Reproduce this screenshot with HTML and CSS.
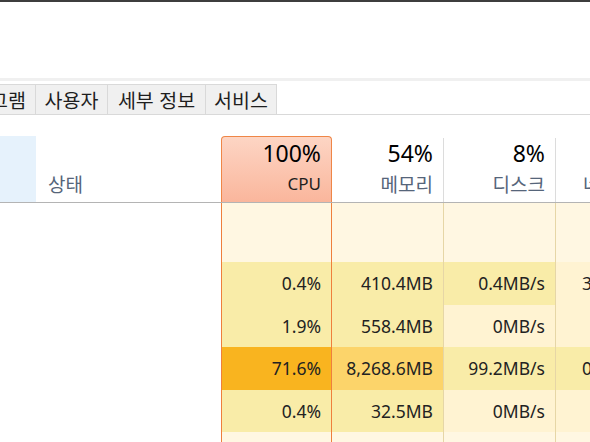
FILE: index.html
```html
<!DOCTYPE html>
<html lang="ko">
<head>
<meta charset="utf-8">
<title>작업 관리자</title>
<link rel="stylesheet" href="styles.css">
</head>
<body>
<div class="app">
  <div class="titlebar"></div>
  <div class="menu"></div>
  <div class="tabs">
    <div class="tab tab-cut">시작 프로그램</div>
    <div class="tab">사용자</div>
    <div class="tab">세부 정보</div>
    <div class="tab">서비스</div>
    <div class="tab-fill"></div>
  </div>
  <div class="table">
    <div class="thead">
      <div class="th c-name"></div>
      <div class="th c-status"><span class="lbl">상태</span></div>
      <div class="th c-cpu metric"><span class="val">100%</span><span class="lbl">CPU</span></div>
      <div class="th c-mem metric"><span class="val">54%</span><span class="lbl">메모리</span></div>
      <div class="th c-disk metric"><span class="val">8%</span><span class="lbl">디스크</span></div>
      <div class="th c-net metric"><span class="val">&nbsp;</span><span class="lbl lbl-left">네트워크</span></div>
    </div>
    <div class="row group">
      <div class="td c-name"></div>
      <div class="td c-status"></div>
      <div class="td c-cpu h0"></div>
      <div class="td c-mem h0"></div>
      <div class="td c-disk h0"></div>
      <div class="td c-net h0"></div>
    </div>
    <div class="row">
      <div class="td c-name"></div>
      <div class="td c-status"></div>
      <div class="td c-cpu h2">0.4%</div>
      <div class="td c-mem h2">410.4MB</div>
      <div class="td c-disk h2">0.4MB/s</div>
      <div class="td c-net h1 net">3.0Mbps</div>
    </div>
    <div class="row">
      <div class="td c-name"></div>
      <div class="td c-status"></div>
      <div class="td c-cpu h2">1.9%</div>
      <div class="td c-mem h2">558.4MB</div>
      <div class="td c-disk h1">0MB/s</div>
      <div class="td c-net h1 net"></div>
    </div>
    <div class="row">
      <div class="td c-name"></div>
      <div class="td c-status"></div>
      <div class="td c-cpu h5">71.6%</div>
      <div class="td c-mem h4">8,268.6MB</div>
      <div class="td c-disk h2">99.2MB/s</div>
      <div class="td c-net h2 net">0Mbps</div>
    </div>
    <div class="row">
      <div class="td c-name"></div>
      <div class="td c-status"></div>
      <div class="td c-cpu h2">0.4%</div>
      <div class="td c-mem h2">32.5MB</div>
      <div class="td c-disk h1">0MB/s</div>
      <div class="td c-net h1 net"></div>
    </div>
    <div class="row">
      <div class="td c-name"></div>
      <div class="td c-status"></div>
      <div class="td c-cpu h0"></div>
      <div class="td c-mem h0"></div>
      <div class="td c-disk h0"></div>
      <div class="td c-net h0"></div>
    </div>
  </div>
</div>
</body>
</html>
```
FILE: styles.css
```css
html, body {
  margin: 0;
  padding: 0;
  background: #ffffff;
}
body {
  width: 590px;
  height: 442px;
  overflow: hidden;
  font-family: "Noto Sans", "Noto Sans CJK KR", sans-serif;
  color: #1e1e1e;
}
.app {
  width: 590px;
  height: 442px;
  overflow: hidden;
}
.titlebar {
  height: 2px;
  background: #3d3d3d;
}
.menu {
  border-bottom: 3px solid #f0f0f0;
  box-sizing: border-box;
  height: 79px;
}
.tabs {
  display: flex;
  height: 31px;
  margin-top: 3px;
  box-sizing: border-box;
  font-family: "Noto Sans CJK KR", "Noto Sans", sans-serif;
  font-size: 19.5px;
  color: #1e1e1e;
}
.tab {
  flex: none;
  display: flex;
  align-items: center;
  justify-content: center;
  padding: 0 4px;
  background: #f0f0f0;
  border-top: 1px solid #d9d9d9;
  border-right: 1px solid #d9d9d9;
  border-bottom: 1px solid #d9d9d9;
  box-sizing: border-box;
  white-space: nowrap;
}
.tab-cut {
  margin-left: -90px;
  width: 126px;
  justify-content: flex-end;
  padding-right: 9px;
}
.tabs .tab:nth-child(2) { width: 72px; }
.tabs .tab:nth-child(3) { width: 98px; }
.tabs .tab:nth-child(4) { width: 71px; }
.tab-fill {
  flex: 1;
  border-bottom: 1px solid #d9d9d9;
}
.table {
  margin-top: 21px;
}
.thead {
  display: flex;
  height: 67px;
  border-bottom: 1px solid #b4b4b4;
  box-sizing: border-box;
}
.row {
  display: flex;
  height: 42.5px;
}
.row.group {
  height: 59px;
}
.c-name { width: 36px; flex: none; }
.c-status { width: 185px; flex: none; }
.c-cpu { width: 111px; flex: none; box-sizing: border-box; }
.c-mem { width: 111px; flex: none; box-sizing: border-box; }
.c-disk { width: 112px; flex: none; box-sizing: border-box; }
.c-net { width: 120px; flex: none; box-sizing: border-box; }

.th {
  box-sizing: border-box;
  display: flex;
  flex-direction: column;
  align-items: flex-end;
  justify-content: flex-end;
  padding: 0 10px 7px 0;
}
.th.c-name {
  background: #e6f2fc;
  padding: 0;
}
.th.c-status {
  align-items: flex-start;
  padding-left: 12px;
}
.th .lbl {
  font-family: "Noto Sans CJK KR", "Noto Sans", sans-serif;
  font-size: 19px;
  line-height: 22px;
  color: #56657a;
}
.th .val {
  font-size: 23px;
  line-height: 28px;
  color: #000000;
  margin-bottom: 6px;
}
.th.c-cpu {
  background: linear-gradient(#fdd5c4, #fab69c);
  border: 1px solid #ef8647;
  border-bottom: none;
  border-radius: 4px 4px 0 0;
}
.th.c-cpu .lbl {
  font-family: "Noto Sans", sans-serif;
  font-size: 17px;
  color: #1e1e1e;
}
.th.c-mem {
  border-top: 2px solid transparent;
}
.th.c-disk,
.th.c-net {
  border-left: 1px solid #dcdcdc;
  margin-top: 2px;
}
.th.c-net {
  align-items: flex-start;
  padding-left: 27px;
}

.td {
  box-sizing: border-box;
  display: flex;
  align-items: center;
  justify-content: flex-end;
  padding-right: 10px;
  font-size: 17.5px;
  color: #222222;
  white-space: nowrap;
}
.td.c-cpu {
  border-left: 1px solid #ef7f3c;
  border-right: 1px solid #ef7f3c;
}
.td.c-disk,
.td.c-net {
  border-left: 1px solid #e6d6a6;
}
.td.net {
  justify-content: flex-start;
  padding-left: 26px;
}
.h0 { background: #fff7e2; }
.h1 { background: #fff3d2; }
.h2 { background: #f9eca8; }
.h4 { background: #fcd46a; }
.h5 { background: #f9b41f; }
```
